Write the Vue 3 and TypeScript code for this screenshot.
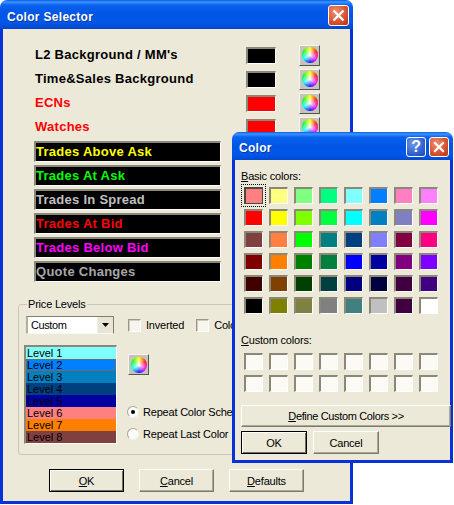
<script setup lang="ts">
const topRows = [
  { text: "L2 Background / MM's", color: '#000000', swatch: '#000000' },
  { text: 'Time&Sales Background', color: '#000000', swatch: '#000000' },
  { text: 'ECNs', color: '#ff0000', swatch: '#ff0000' },
  { text: 'Watches', color: '#ff0000', swatch: '#ff0000' },
]
const blackRows = [
  { text: 'Trades Above Ask', color: '#ffff00' },
  { text: 'Trades At Ask', color: '#00ff00' },
  { text: 'Trades In Spread', color: '#c0c0c0' },
  { text: 'Trades At Bid', color: '#ff0000' },
  { text: 'Trades Below Bid', color: '#ff00ff' },
  { text: 'Quote Changes', color: '#a8a8a8' },
]
const levels = ['#80ffff', '#0080ff', '#0080c0', '#004080', '#0000a0', '#ff8080', '#ff8000', '#804040']
const basic = [
  '#ff8080', '#ffff80', '#80ff80', '#00ff80', '#80ffff', '#0080ff', '#ff80c0', '#ff80ff',
  '#ff0000', '#ffff00', '#80ff00', '#00ff40', '#00ffff', '#0080c0', '#8080c0', '#ff00ff',
  '#804040', '#ff8040', '#00ff00', '#008080', '#004080', '#8080ff', '#800040', '#ff0080',
  '#800000', '#ff8000', '#008000', '#008040', '#0000ff', '#0000a0', '#800080', '#8000ff',
  '#400000', '#804000', '#004000', '#004040', '#000080', '#000040', '#400040', '#400080',
  '#000000', '#808000', '#808040', '#808080', '#408080', '#c0c0c0', '#400040', '#ffffff',
]
</script>

<template>
  <div class="desk">
    <div class="window main">
      <div class="title">
        <span class="title-text">Color Selector</span>
        <span class="cap close">
          <svg viewBox="0 0 21 21" width="21" height="21"><path d="M5.5 5.5l10 10M15.5 5.5l-10 10" stroke="#fff" stroke-width="2.4" fill="none" /></svg>
        </span>
      </div>
      <div class="body">
        <div class="top-rows">
          <div v-for="r in topRows" :key="r.text" class="top-row">
            <span class="big label" :style="{ color: r.color }">{{ r.text }}</span>
            <span class="swatch big-swatch" :style="{ background: r.swatch }"></span>
            <span class="wheel-btn"><span class="wheel"></span></span>
          </div>
        </div>
        <div class="black-rows">
          <div v-for="r in blackRows" :key="r.text" class="big black-row" :style="{ color: r.color }">{{ r.text }}</div>
        </div>
        <div class="group">
          <span class="legend">Price Levels</span>
          <div class="opts">
            <div class="select">
              <span class="select-text">Custom</span>
              <span class="arrow"><svg width="7" height="4" viewBox="0 0 7 4"><path d="M0 0h7L3.5 4z" fill="#000" /></svg></span>
            </div>
            <span class="check"></span><span class="check-text">Inverted</span>
            <span class="check second"></span><span class="check-text">Color Bars</span>
          </div>
          <div class="levels-row">
            <div class="list">
              <div v-for="(c, i) in levels" :key="c" class="level" :class="{ sel: i === 1 }" :style="{ background: c }">Level {{ i + 1 }}</div>
            </div>
            <div class="levels-side">
              <span class="wheel-btn"><span class="wheel"></span></span>
              <div class="radios">
                <div class="radio-row"><span class="radio on"></span>Repeat Color Scheme</div>
                <div class="radio-row"><span class="radio"></span>Repeat Last Color</div>
              </div>
            </div>
          </div>
        </div>
        <div class="actions">
          <span class="btn default wide"><u>O</u>K</span>
          <span class="btn wide"><u>C</u>ancel</span>
          <span class="btn wide"><u>D</u>efaults</span>
        </div>
      </div>
    </div>

    <div class="window dialog">
      <div class="title dialog-title">
        <span class="title-text">Color</span>
        <span class="cap help">?</span>
        <span class="cap close small">
          <svg viewBox="0 0 21 21" width="20" height="20"><path d="M5.5 5.5l10 10M15.5 5.5l-10 10" stroke="#fff" stroke-width="2.4" fill="none" /></svg>
        </span>
      </div>
      <div class="body dialog-body">
        <div class="dlg-label"><u>B</u>asic colors:</div>
        <div class="palette">
          <span v-for="(c, i) in basic" :key="i" class="swatch cell" :class="{ focus: i === 0 }" :style="{ background: c }"></span>
        </div>
        <div class="dlg-label custom-label"><u>C</u>ustom colors:</div>
        <div class="palette custom">
          <span v-for="i in 16" :key="i" class="swatch cell blank"></span>
        </div>
        <span class="btn define"><u>D</u>efine Custom Colors &gt;&gt;</span>
        <div class="dlg-actions">
          <span class="btn default dlg-btn">OK</span>
          <span class="btn dlg-btn">Cancel</span>
        </div>
      </div>
    </div>
  </div>
</template>

<style>
html, body { margin: 0; background: #fff; }
</style>

<style scoped>
.desk {
  position: relative;
  width: 454px;
  height: 505px;
  overflow: hidden;
  background: #fff;
  font: 11px/14px "Liberation Sans", Arial, sans-serif;
  letter-spacing: -0.2px;
  color: #000;
}
.window { display: flex; flex-direction: column; box-sizing: border-box; }
.main { width: 353px; height: 504px; }
.dialog { position: absolute; left: 232px; top: 132px; width: 221px; height: 331px; }
.title {
  flex: none;
  box-sizing: border-box;
  height: 29px;
  display: flex;
  align-items: center;
  padding: 2px 4px 0 7px;
  border-radius: 7px 7px 0 0;
  background: linear-gradient(#0a5be8 0, #3d95ff 2px, #0a62ee 5px, #0055e5 14px, #0258ea 22px, #0147cc 29px);
}
.dialog-title { height: 28px; gap: 3px; }
.title-text {
  flex: 1;
  padding-top: 2px;
  color: #fff;
  font: bold 12px/16px "Liberation Sans", Arial, sans-serif;
  letter-spacing: 0.3px;
  text-shadow: 1px 1px 0 #0a3aa0;
}
.cap {
  flex: none;
  box-sizing: border-box;
  width: 21px;
  height: 21px;
  border: 1px solid #fff;
  border-radius: 3px;
  display: flex;
  align-items: center;
  justify-content: center;
  overflow: hidden;
}
.close { background: radial-gradient(circle at 35% 30%, #ef8f70, #d8502c 60%, #b93212); }
.close svg { flex: none; }
.small { width: 20px; height: 20px; }
.help {
  width: 20px;
  height: 20px;
  background: radial-gradient(circle at 35% 30%, #6d98ea, #2f5fd0 65%, #1d45ad);
  color: #fff;
  font: bold 16px/18px "Liberation Sans", Arial, sans-serif;
}
.body {
  flex: 1;
  box-sizing: border-box;
  background: #ece9d8;
  border: 3px solid #0831d9;
  border-top: 0;
  padding-top: 14px;
}
.big {
  font: bold 13px/21px "Liberation Sans", Arial, sans-serif;
  letter-spacing: 0.27px;
}
.top-rows { display: flex; flex-direction: column; padding-left: 32px; }
.top-row { display: flex; align-items: center; height: 24px; }
.label { width: 211px; padding-bottom: 1px; }
.swatch {
  box-sizing: border-box;
  display: block;
  border-style: solid;
  border-width: 2px 1px 1px 2px;
  border-color: #8b8878 #fff #fff #8b8878;
  background: #ece9d8;
}
.big-swatch { width: 30px; height: 17px; margin-right: 23px; }
.wheel-btn {
  flex: none;
  box-sizing: border-box;
  width: 21px;
  height: 21px;
  display: flex;
  align-items: center;
  justify-content: center;
  background: #c4c4bc;
  border: 1px solid;
  border-color: #f4f4f0 #55554d #55554d #f4f4f0;
}
.wheel {
  display: block;
  width: 16px;
  height: 16px;
  border-radius: 50%;
  background:
    radial-gradient(circle, #fff 0%, rgba(255, 255, 255, 0) 72%),
    conic-gradient(#ffff00, #ff0000, #ff00ff, #0000ff, #00ffff, #00ff00, #ffff00);
}
.black-rows { display: flex; flex-direction: column; gap: 3px; margin: 2px 0 0 31px; width: 187px; }
.black-row {
  box-sizing: border-box;
  height: 21px;
  line-height: 18px;
  background: #000;
  border-style: solid;
  border-width: 2px 1px 1px 2px;
  border-color: #8b8878 #fff #fff #8b8878;
  white-space: nowrap;
}
.group {
  position: relative;
  box-sizing: border-box;
  width: 327px;
  height: 151px;
  margin: 22px 0 0 15px;
  padding: 11px 5px 0;
  border: 1px solid #c9c7b8;
  border-radius: 3px;
}
.legend {
  position: absolute;
  left: 8px;
  top: -8px;
  padding: 0 1px;
  background: #ece9d8;
}
.opts { display: flex; align-items: center; }
.select {
  box-sizing: border-box;
  width: 88px;
  height: 18px;
  margin-left: 2px;
  display: flex;
  background: #fff;
  border-style: solid;
  border-width: 1px 1px 1px 2px;
  border-color: #808070 #808070 #f8f8f4 #b0ae9e;
}
.select-text { flex: 1; padding-left: 3px; line-height: 16px; letter-spacing: -0.4px; }
.arrow {
  box-sizing: border-box;
  width: 16px;
  display: flex;
  align-items: center;
  justify-content: center;
  background: #e8e5d4;
  border-left: 1px solid #eee;
}
.check {
  box-sizing: border-box;
  width: 13px;
  height: 13px;
  margin-left: 14px;
  background: #f6f5ee;
  border: 1px solid #9a9888;
  border-right-color: #fff;
  border-bottom-color: #fff;
  box-shadow: inset 1px 1px 0 #cfccbc;
}
.check.second { margin-left: 12px; }
.check-text { margin-left: 5px; white-space: nowrap; }
.levels-row { display: flex; margin-top: 11px; }
.list {
  flex: none;
  box-sizing: border-box;
  width: 93px;
  height: 99px;
  border-style: solid;
  border-width: 2px 1px 1px 2px;
  border-color: #8b8878 #fff #fff #8b8878;
  overflow: hidden;
}
.level { box-sizing: border-box; height: 12px; line-height: 12px; padding-left: 1px; letter-spacing: 0; }
.level.sel { outline: 1px solid #6a6a6a; outline-offset: -1px; }
.levels-side { margin: 9px 0 0 11px; display: flex; flex-direction: column; align-items: flex-start; }
.radios { display: flex; flex-direction: column; margin: 26px 0 0 -1px; }
.radio-row { display: flex; align-items: center; height: 22px; white-space: nowrap; }
.radio {
  box-sizing: border-box;
  width: 12px;
  height: 12px;
  margin-right: 4px;
  border-radius: 50%;
  background: #fbfbf8;
  border: 1px solid #a8a698;
  border-right-color: #f4f3ea;
  border-bottom-color: #f4f3ea;
  display: flex;
  align-items: center;
  justify-content: center;
}
.radio.on::after {
  content: "";
  width: 4px;
  height: 4px;
  border-radius: 50%;
  background: #000;
}
.actions { display: flex; gap: 15px; margin: 14px 0 0 46px; }
.btn {
  box-sizing: border-box;
  display: flex;
  align-items: center;
  justify-content: center;
  background: #ece9d8;
  border: 1px solid;
  border-color: #fff #7d7b6e #7d7b6e #fff;
  box-shadow: inset -1px -1px 0 #aca899;
  white-space: nowrap;
}
.btn.default {
  border-color: #000;
  box-shadow: inset 1px 1px 0 #fff, inset -1px -1px 0 #6f6d60;
}
.wide { width: 75px; height: 23px; }
.dialog-body { padding: 9px 0 0 6px; }
.dlg-label { height: 14px; }
.custom-label { margin-top: 19px; }
.palette {
  display: grid;
  grid-template-columns: repeat(8, 19px);
  grid-auto-rows: 17px;
  gap: 5px 6px;
  margin: 4px 0 0 3px;
}
.palette.custom { margin-top: 6px; }
.cell { width: 19px; height: 17px; }
.blank { background: #fbfaf5; }
.focus { outline: 1px dotted #000; outline-offset: 2px; border-color: #4a4a40 #4a4a40 #4a4a40 #4a4a40; }
.define { width: 210px; height: 22px; margin-top: 13px; letter-spacing: -0.35px; }
.dlg-actions { display: flex; gap: 6px; margin-top: 4px; }
.dlg-btn { width: 66px; height: 23px; }
</style>
